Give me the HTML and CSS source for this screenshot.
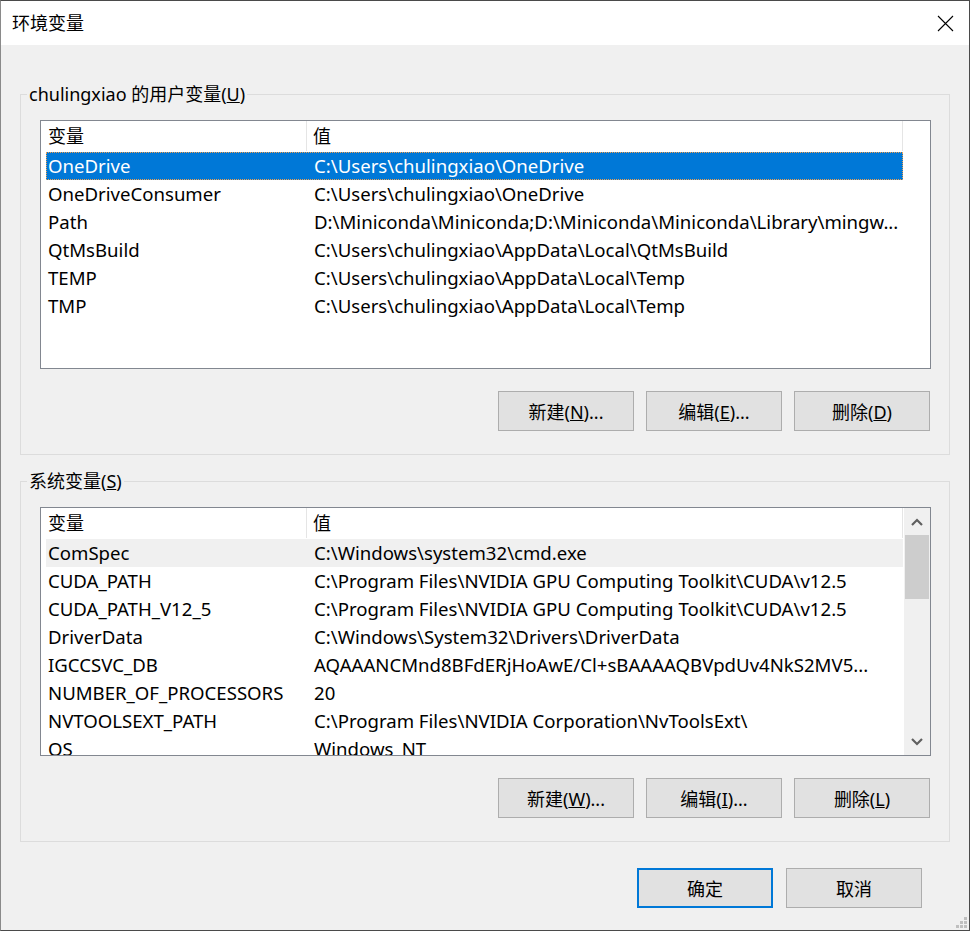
FILE: index.html
```html
<!DOCTYPE html>
<html lang="zh-CN">

<head>
    <meta charset="UTF-8">
    <meta name="viewport" content="width=device-width, initial-scale=1.0">
    <title>环境变量</title>
    <link rel="stylesheet" href="styles.css">
</head>

<body>
    <div class="window">
        <header class="titlebar">
            <span class="title">环境变量</span>
            <button class="close" aria-label="关闭">
                <svg width="17" height="17" viewBox="0 0 17 17">
                    <path d="M1 1 L16 16 M16 1 L1 16" stroke="#000" stroke-width="1.1" fill="none" />
                </svg>
            </button>
        </header>

        <main class="content">
            <fieldset class="group">
                <legend>chulingxiao 的用户变量(<u>U</u>)</legend>

                <div class="listview">
                    <div class="list-main">
                        <div class="list-header">
                            <div class="col-name">变量</div>
                            <div class="col-value">值</div>
                        </div>
                        <div class="row selected">
                            <span class="cell-name">OneDrive</span>
                            <span class="cell-value">C:\Users\chulingxiao\OneDrive</span>
                        </div>
                        <div class="row">
                            <span class="cell-name">OneDriveConsumer</span>
                            <span class="cell-value">C:\Users\chulingxiao\OneDrive</span>
                        </div>
                        <div class="row">
                            <span class="cell-name">Path</span>
                            <span class="cell-value">D:\Miniconda\Miniconda;D:\Miniconda\Miniconda\Library\mingw...</span>
                        </div>
                        <div class="row">
                            <span class="cell-name">QtMsBuild</span>
                            <span class="cell-value">C:\Users\chulingxiao\AppData\Local\QtMsBuild</span>
                        </div>
                        <div class="row">
                            <span class="cell-name">TEMP</span>
                            <span class="cell-value">C:\Users\chulingxiao\AppData\Local\Temp</span>
                        </div>
                        <div class="row">
                            <span class="cell-name">TMP</span>
                            <span class="cell-value">C:\Users\chulingxiao\AppData\Local\Temp</span>
                        </div>
                    </div>
                </div>

                <div class="button-row">
                    <button class="btn">新建(<u>N</u>)...</button>
                    <button class="btn">编辑(<u>E</u>)...</button>
                    <button class="btn">删除(<u>D</u>)</button>
                </div>
            </fieldset>

            <fieldset class="group">
                <legend>系统变量(<u>S</u>)</legend>

                <div class="listview">
                    <div class="list-main">
                        <div class="list-header">
                            <div class="col-name">变量</div>
                            <div class="col-value">值</div>
                        </div>
                        <div class="row inactive">
                            <span class="cell-name">ComSpec</span>
                            <span class="cell-value">C:\Windows\system32\cmd.exe</span>
                        </div>
                        <div class="row">
                            <span class="cell-name">CUDA_PATH</span>
                            <span class="cell-value">C:\Program Files\NVIDIA GPU Computing Toolkit\CUDA\v12.5</span>
                        </div>
                        <div class="row">
                            <span class="cell-name">CUDA_PATH_V12_5</span>
                            <span class="cell-value">C:\Program Files\NVIDIA GPU Computing Toolkit\CUDA\v12.5</span>
                        </div>
                        <div class="row">
                            <span class="cell-name">DriverData</span>
                            <span class="cell-value">C:\Windows\System32\Drivers\DriverData</span>
                        </div>
                        <div class="row">
                            <span class="cell-name">IGCCSVC_DB</span>
                            <span class="cell-value">AQAAANCMnd8BFdERjHoAwE/Cl+sBAAAAQBVpdUv4NkS2MV5...</span>
                        </div>
                        <div class="row">
                            <span class="cell-name">NUMBER_OF_PROCESSORS</span>
                            <span class="cell-value">20</span>
                        </div>
                        <div class="row">
                            <span class="cell-name">NVTOOLSEXT_PATH</span>
                            <span class="cell-value">C:\Program Files\NVIDIA Corporation\NvToolsExt\</span>
                        </div>
                        <div class="row">
                            <span class="cell-name">OS</span>
                            <span class="cell-value">Windows_NT</span>
                        </div>
                    </div>
                    <div class="scrollbar">
                        <div class="arrow">
                            <svg width="12" height="8" viewBox="0 0 12 8">
                                <path d="M1 7 L6 2 L11 7" stroke="#606060" stroke-width="2.2" fill="none" />
                            </svg>
                        </div>
                        <div class="track">
                            <div class="thumb"></div>
                        </div>
                        <div class="arrow">
                            <svg width="12" height="8" viewBox="0 0 12 8">
                                <path d="M1 1 L6 6 L11 1" stroke="#606060" stroke-width="2.2" fill="none" />
                            </svg>
                        </div>
                    </div>
                </div>

                <div class="button-row">
                    <button class="btn">新建(<u>W</u>)...</button>
                    <button class="btn">编辑(<u>I</u>)...</button>
                    <button class="btn">删除(<u>L</u>)</button>
                </div>
            </fieldset>

            <div class="dialog-buttons">
                <button class="btn default">确定</button>
                <button class="btn">取消</button>
            </div>
        </main>

        <svg class="grip" width="14" height="14" viewBox="0 0 14 14">
            <rect x="10" y="2" width="3" height="3" fill="#bfbfbf" />
            <rect x="6" y="6" width="3" height="3" fill="#bfbfbf" />
            <rect x="10" y="6" width="3" height="3" fill="#bfbfbf" />
            <rect x="2" y="10" width="3" height="3" fill="#bfbfbf" />
            <rect x="6" y="10" width="3" height="3" fill="#bfbfbf" />
            <rect x="10" y="10" width="3" height="3" fill="#bfbfbf" />
        </svg>
    </div>
</body>

</html>
```

FILE: styles.css
```css
* {
    box-sizing: border-box;
}

body {
    margin: 0;
    font-family: "Noto Sans", "Noto Sans CJK SC", sans-serif;
    font-size: 18px;
    color: #000;
    background: #f0f0f0;
}

.window {
    position: relative;
    width: 970px;
    height: 931px;
    border: 1px solid #4a4a4a;
    border-left-color: #8a8a8a;
    background: #f0f0f0;
    overflow: hidden;
}

.titlebar {
    display: flex;
    align-items: center;
    justify-content: space-between;
    height: 44px;
    padding: 0 0 2px 11px;
    background: #fff;
}

.title {
    font-size: 18px;
}

.close {
    display: flex;
    align-items: center;
    justify-content: center;
    width: 46px;
    height: 44px;
    margin-top: 2px;
    margin-right: 1px;
    padding: 0;
    border: none;
    background: transparent;
}

.content {
    padding: 37px 19px 0 19px;
}

.group {
    margin: 0 0 14px 0;
    min-width: 0;
    padding: 14px 18px 23px 19px;
    border: 1px solid #dcdcdc;
}

.group legend {
    margin-left: -13px;
    padding: 0 2px;
    height: 24px;
    line-height: 24px;
}

.listview {
    display: flex;
    height: 249px;
    border: 1px solid #828790;
    background: #fff;
    overflow: hidden;
}

.list-main {
    flex: 1;
    overflow: hidden;
}

.list-header {
    display: flex;
    height: 31px;
    line-height: 31px;
}

.list-header div {
    height: 30px;
    border-right: 1px solid #e5e5e5;
}

.col-name {
    width: 266px;
    padding-left: 7px;
}

.col-value {
    width: 596px;
    padding-left: 6px;
}

.row {
    display: flex;
    width: 857px;
    height: 28px;
    margin-left: 5px;
    font-size: 18.6px;
    line-height: 28px;
    white-space: nowrap;
}

.cell-name {
    width: 266px;
    padding-left: 2px;
}

.cell-value {
    flex: 1;
    padding-left: 2px;
    overflow: hidden;
}

.row.selected {
    background: #0078d7;
    color: #fff;
    outline: 1px dotted #f0a050;
    outline-offset: -1px;
}

.row.inactive {
    background: #f0f0f0;
}

.scrollbar {
    display: flex;
    flex-direction: column;
    width: 26px;
    background: #f0f0f0;
}

.arrow {
    display: flex;
    align-items: center;
    justify-content: center;
    height: 27px;
}

.track {
    flex: 1;
    padding: 0 1px;
}

.thumb {
    height: 64px;
    background: #cdcdcd;
}

.button-row {
    display: flex;
    justify-content: flex-end;
    gap: 12px;
    margin-top: 22px;
    margin-right: 1px;
}

.btn {
    width: 136px;
    height: 40px;
    padding: 0;
    font-family: inherit;
    font-size: 18px;
    color: #000;
    background: #e1e1e1;
    border: 1px solid #adadad;
}

.btn.default {
    border: 2px solid #0078d7;
}

.dialog-buttons {
    display: flex;
    justify-content: flex-end;
    gap: 13px;
    margin-top: 26px;
    padding-right: 28px;
}

.grip {
    position: absolute;
    right: 1px;
    bottom: 1px;
}
```
